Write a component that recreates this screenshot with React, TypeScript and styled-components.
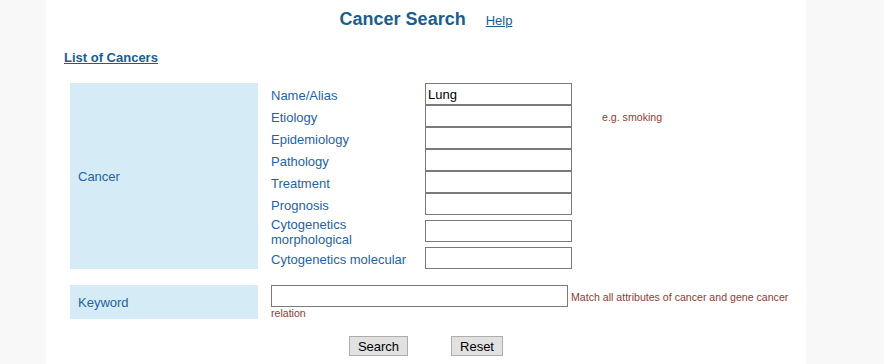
import React from "react";
import styled, { createGlobalStyle } from "styled-components";

const GlobalStyle = createGlobalStyle`
  html, body {
    margin: 0;
    padding: 0;
    background: #f8f8f8;
    font-family: "Liberation Sans", Arial, sans-serif;
  }
`;

const Page = styled.div`
  width: 760px;
  min-height: 364px;
  margin-left: 46px;
  background: #ffffff;
  box-sizing: border-box;
  padding-top: 8px;
`;

const Header = styled.div`
  display: flex;
  justify-content: center;
  align-items: baseline;
  gap: 20px;
`;

const Title = styled.h1`
  margin: 0;
  font-size: 18px;
  line-height: 22px;
  font-weight: bold;
  color: #1b5d8b;
`;

const HelpLink = styled.a`
  font-size: 13px;
  color: #1b5d8b;
  text-decoration: underline;
`;

const ListLink = styled.a`
  display: inline-block;
  margin: 20px 0 0 18px;
  font-size: 13px;
  line-height: 16px;
  font-weight: bold;
  color: #1b5d8b;
  text-decoration: underline;
`;

const Section = styled.div<{ $top: number }>`
  display: flex;
  margin-left: 24px;
  margin-top: ${(p) => p.$top}px;
`;

const GroupCell = styled.div<{ $height?: number }>`
  width: 188px;
  ${(p) => (p.$height ? `height: ${p.$height}px;` : "")}
  background: #d5ecf6;
  display: flex;
  align-items: center;
  box-sizing: border-box;
  padding-left: 8px;
  font-size: 13px;
  color: #1f62a3;
  flex-shrink: 0;
`;

const Fields = styled.div`
  margin-left: 13px;
  display: grid;
  grid-template-columns: 154px 147px auto;
  align-items: center;
`;

const Label = styled.div`
  font-size: 13px;
  line-height: 15px;
  color: #1f62a3;
  padding: 2px 4px 0 0;
`;

const TextInput = styled.input<{ $width: number }>`
  box-sizing: border-box;
  width: ${(p) => p.$width}px;
  height: 22px;
  margin: 0;
  border: 1px solid #7a7a7a;
  padding: 0 2px;
  font-family: "Liberation Sans", Arial, sans-serif;
  font-size: 13px;
  color: #000;
  background: #fff;
  outline: none;
`;

const Hint = styled.span`
  font-size: 10.6px;
  color: #8e3b36;
  padding-left: 30px;
`;

const KeywordContent = styled.div`
  margin-left: 13px;
  width: 530px;
  font-size: 10.6px;
  line-height: 13px;
  color: #8e3b36;
`;

const InlineNote = styled.span`
  margin-left: 3px;
`;

const Buttons = styled.div`
  display: flex;
  justify-content: center;
  gap: 43px;
  margin-top: 16px;
`;

const Button = styled.button<{ $width: number }>`
  box-sizing: border-box;
  width: ${(p) => p.$width}px;
  height: 20px;
  padding: 0;
  background: #e1e1e1;
  border: 1px solid #adadad;
  font-family: "Liberation Sans", Arial, sans-serif;
  font-size: 13px;
  color: #000;
`;

const fields: { label: string; value?: string; hint?: string }[] = [
  { label: "Name/Alias", value: "Lung" },
  { label: "Etiology", hint: "e.g. smoking" },
  { label: "Epidemiology" },
  { label: "Pathology" },
  { label: "Treatment" },
  { label: "Prognosis" },
  { label: "Cytogenetics morphological" },
  { label: "Cytogenetics molecular" },
];

export default function App() {
  return (
    <>
      <GlobalStyle />
      <Page>
        <Header>
          <Title>Cancer Search</Title>
          <HelpLink href="#">Help</HelpLink>
        </Header>
        <ListLink href="#">List of Cancers</ListLink>
        <Section $top={17}>
          <GroupCell>Cancer</GroupCell>
          <Fields>
            {fields.map((f) => (
              <React.Fragment key={f.label}>
                <Label>{f.label}</Label>
                <TextInput $width={147} defaultValue={f.value ?? ""} />
                <div>{f.hint ? <Hint>{f.hint}</Hint> : null}</div>
              </React.Fragment>
            ))}
          </Fields>
        </Section>
        <Section $top={16}>
          <GroupCell $height={34}>Keyword</GroupCell>
          <KeywordContent>
            <TextInput $width={297} />
            <InlineNote>Match all attributes of cancer and gene cancer relation</InlineNote>
          </KeywordContent>
        </Section>
        <Buttons>
          <Button $width={59}>Search</Button>
          <Button $width={52}>Reset</Button>
        </Buttons>
      </Page>
    </>
  );
}
